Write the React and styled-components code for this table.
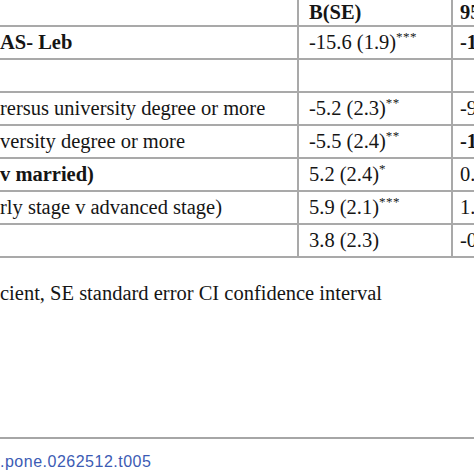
import React from "react";
import styled, { createGlobalStyle } from "styled-components";

const GlobalStyle = createGlobalStyle`
  html, body {
    margin: 0;
    padding: 0;
    background: #fff;
    overflow: hidden;
  }
`;

const Page = styled.div`
  width: 474px;
  height: 474px;
  overflow: hidden;
  display: flex;
  flex-direction: column;
  font-family: "Liberation Serif", "DejaVu Serif", serif;
  color: #151515;
`;

const Table = styled.table`
  border-collapse: collapse;
  table-layout: fixed;
  width: 560px;
  font-size: 20.5px;
`;

const Row = styled.tr`
  height: ${(p) => p.h || 33}px;
  border-bottom: 2px solid #a9a9a9;
`;

const Cell = styled.td`
  padding: 0 0 0 ${(p) => (p.first ? 0 : p.mid ? 10 : 7)}px;
  border-right: ${(p) => (p.first || p.mid ? "2px solid #a9a9a9" : "none")};
  font-weight: ${(p) => (p.bold ? 700 : 400)};
  white-space: nowrap;
  overflow: hidden;
  vertical-align: middle;
  line-height: 1;
`;

const Stars = styled.sup`
  font-size: 13px;
  letter-spacing: 0.5px;
  vertical-align: 8px;
  line-height: 0;
`;

const Note = styled.p`
  margin: 25px 0 0 0;
  font-size: 20.5px;
  line-height: 1;
  white-space: nowrap;
`;

const Rule = styled.div`
  margin-top: 133px;
  height: 2px;
  background: #a6a6a6;
`;

const Link = styled.div`
  margin-top: 15px;
  font-family: "Liberation Sans", Arial, sans-serif;
  font-size: 16px;
  line-height: 1;
  color: #3c5bb4;
  letter-spacing: 0.5px;
`;

const rows = [
  { label: "AS- Leb", bold: true, b: "-15.6 (1.9)", s: "***", ci: "-1", ciBold: true },
  { label: "", b: "", ci: "" },
  { label: "rersus university degree or more", b: "-5.2 (2.3)", s: "**", ci: "-9" },
  { label: "versity degree or more", b: "-5.5 (2.4)", s: "**", ci: "-1", ciBold: true },
  { label: "v married)", bold: true, b: "5.2 (2.4)", s: "*", ci: "0." },
  { label: "rly stage v advanced stage)", b: "5.9 (2.1)", s: "***", ci: "1." },
  { label: "", b: "3.8 (2.3)", ci: "-0" },
];

export default function App() {
  return (
    <Page>
      <GlobalStyle />
      <Table>
        <colgroup>
          <col style={{ width: 298 }} />
          <col style={{ width: 154 }} />
          <col />
        </colgroup>
        <tbody>
          <Row h={26}>
            <Cell first />
            <Cell mid bold>B(SE)</Cell>
            <Cell bold>95</Cell>
          </Row>
          {rows.map((r, i) => (
            <Row key={i}>
              <Cell first bold={r.bold}>{r.label}</Cell>
              <Cell mid>
                {r.b}
                {r.s && <Stars>{r.s}</Stars>}
              </Cell>
              <Cell bold={r.ciBold}>{r.ci}</Cell>
            </Row>
          ))}
        </tbody>
      </Table>
      <Note>cient, SE standard error CI confidence interval</Note>
      <Rule />
      <Link>.pone.0262512.t005</Link>
    </Page>
  );
}
